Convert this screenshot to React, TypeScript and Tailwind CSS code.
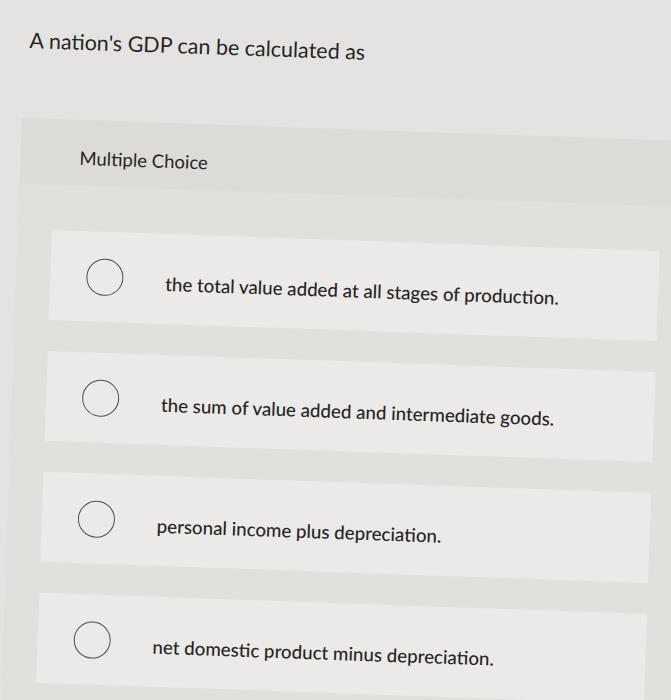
export default function App() {
  const options = [
    "the total value added at all stages of production.",
    "the sum of value added and intermediate goods.",
    "personal income plus depreciation.",
    "net domestic product minus depreciation.",
  ];

  return (
    <div
      className="relative h-[700px] w-[671px] overflow-hidden bg-[#e4e3e1] text-[#262626]"
      style={{ fontFamily: "Lato, 'Open Sans', sans-serif" }}
    >
      <div className="w-[760px] origin-top-left rotate-[2deg]">
        {/* Question */}
        <div className="pl-[31px] pt-[24px] text-[21.5px] leading-[30px]">
          A nation's GDP can be calculated as
        </div>

        {/* Answer panel */}
        <div className="ml-[26px] mt-[63px] bg-[#dcdbd8]">
          <div className="h-[66px] pl-[59px] pt-[26px] text-[18.5px] leading-[24px]">
            Multiple Choice
          </div>
          <div className="flex flex-col gap-[31px] bg-[#e1e0dd] pb-[40px] pl-[34px] pt-[45px]">
            {options.map((text) => (
              <div
                key={text}
                className="flex h-[90px] w-[608px] items-center bg-[#ebeae8] pl-[36px]"
              >
                <span className="h-[37px] w-[37px] shrink-0 rounded-full border-[1.5px] border-[#4f4f4f]" />
                <span className="ml-[42px] mt-[10px] text-[18.7px] font-medium leading-[24px]">
                  {text}
                </span>
              </div>
            ))}
          </div>
        </div>
      </div>
    </div>
  );
}
